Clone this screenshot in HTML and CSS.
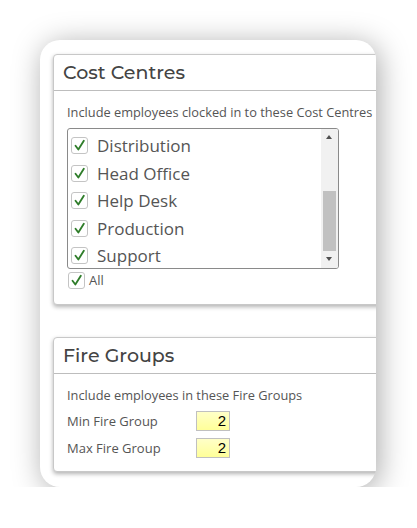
FILE: index.html
```html
<!DOCTYPE html>
<html>
<head>
<meta charset="utf-8">
<link rel="stylesheet" href="styles.css">
</head>
<body>
<div class="card">
  <section class="panel cost">
    <h2 class="panel-title">Cost Centres</h2>
    <div class="panel-body">
      <p class="intro">Include employees clocked in to these Cost Centres</p>
      <div class="listbox">
        <ul class="items">
          <li class="item"><span class="cb"><svg viewBox="0 0 17 17"><path d="M4 8.8 L7.2 13 L13.4 3.2" /></svg></span>Distribution</li>
          <li class="item"><span class="cb"><svg viewBox="0 0 17 17"><path d="M4 8.8 L7.2 13 L13.4 3.2" /></svg></span>Head Office</li>
          <li class="item"><span class="cb"><svg viewBox="0 0 17 17"><path d="M4 8.8 L7.2 13 L13.4 3.2" /></svg></span>Help Desk</li>
          <li class="item"><span class="cb"><svg viewBox="0 0 17 17"><path d="M4 8.8 L7.2 13 L13.4 3.2" /></svg></span>Production</li>
          <li class="item"><span class="cb"><svg viewBox="0 0 17 17"><path d="M4 8.8 L7.2 13 L13.4 3.2" /></svg></span>Support</li>
        </ul>
        <div class="scrollbar">
          <span class="arrow up"></span>
          <div class="track"><div class="thumb"></div></div>
          <span class="arrow down"></span>
        </div>
      </div>
      <label class="all"><span class="cb"><svg viewBox="0 0 17 17"><path d="M4 8.8 L7.2 13 L13.4 3.2" /></svg></span>All</label>
    </div>
  </section>

  <section class="panel fire">
    <h2 class="panel-title">Fire Groups</h2>
    <div class="panel-body">
      <p class="intro">Include employees in these Fire Groups</p>
      <div class="field"><span class="field-label">Min Fire Group</span><span class="num">2</span></div>
      <div class="field"><span class="field-label">Max Fire Group</span><span class="num">2</span></div>
    </div>
  </section>
</div>
</body>
</html>
```

FILE: styles.css
```css
html, body {
  margin: 0;
  padding: 0;
  background: #ffffff;
}
body {
  padding: 40px 0 0 40px;
  font-family: "Open Sans", "Noto Sans", sans-serif;
  color: #555;
}
.card {
  width: 336px;
  height: 447px;
  box-sizing: border-box;
  background: #fff;
  border-radius: 20px;
  box-shadow: 3px 4px 30px rgba(0, 0, 0, 0.34);
  overflow: hidden;
  padding: 14px 0 0 13px;
}
.panel {
  width: 360px;
  box-sizing: border-box;
  border: 1px solid #c8c8c8;
  border-radius: 4px;
  background: #fff;
  box-shadow: 0 2px 4px rgba(0, 0, 0, 0.3);
}
.panel-title {
  margin: 0;
  height: 36px;
  box-sizing: border-box;
  border-bottom: 1px solid #bdbdbd;
  padding: 6px 0 0 9px;
  font-family: "Montserrat", "Noto Sans", sans-serif;
  font-weight: 500;
  font-size: 19px;
  color: #444;
  line-height: 24px;
}
.panel-body {
  padding: 12px 0 0 13px;
}
.intro {
  margin: 0;
  font-size: 12.8px;
  line-height: 18px;
  color: #555;
}
.cost .panel-body { height: 213px; box-sizing: border-box; }
.listbox {
  margin-top: 7px;
  width: 272px;
  height: 141px;
  box-sizing: border-box;
  border: 1px solid #8a8a8a;
  border-radius: 3px;
  display: flex;
  overflow: hidden;
}
.items {
  list-style: none;
  margin: 0;
  padding: 3px 0 0 0;
  flex: 1;
}
.item {
  height: 27.5px;
  display: flex;
  align-items: center;
  padding-left: 3px;
  font-size: 17px;
  color: #555;
}
.cb {
  width: 17px;
  height: 17px;
  box-sizing: border-box;
  border: 1px solid #c4c4c4;
  border-radius: 3px;
  background: #fff;
  display: inline-flex;
  flex: none;
}
.cb svg {
  width: 100%;
  height: 100%;
  fill: none;
  stroke: #2f7d2a;
  stroke-width: 2.1;
  stroke-linecap: round;
  stroke-linejoin: round;
}
.item .cb { margin-right: 9px; }
.scrollbar {
  width: 17px;
  background: #f1f1f1;
  display: flex;
  flex-direction: column;
  align-items: center;
}
.arrow {
  height: 17px;
  width: 17px;
  position: relative;
  flex: none;
}
.arrow::after {
  content: "";
  position: absolute;
  left: 5px;
  width: 0;
  height: 0;
  border-left: 3.5px solid transparent;
  border-right: 3.5px solid transparent;
}
.arrow.up::after {
  top: 6px;
  border-bottom: 4px solid #505050;
}
.arrow.down::after {
  top: 6px;
  border-top: 4px solid #505050;
}
.track {
  flex: 1;
  width: 13px;
  display: flex;
  flex-direction: column;
  justify-content: flex-end;
}
.thumb {
  height: 60px;
  background: #c1c1c1;
}
.all {
  display: flex;
  align-items: center;
  margin-top: 2px;
  margin-left: 1px;
  font-size: 13px;
  color: #555;
}
.all .cb { margin-right: 4px; }

.fire {
  margin-top: 32px;
}
.fire .panel-body {
  height: 97px;
  box-sizing: border-box;
  padding-top: 12px;
}
.field {
  display: flex;
  align-items: center;
  height: 20px;
  margin-top: 7px;
  font-size: 13px;
}
.fire .intro { margin-bottom: 0; }
.field-label {
  width: 129px;
}
.num {
  width: 34px;
  height: 20px;
  box-sizing: border-box;
  border: 1px solid #c0c0c0;
  background: linear-gradient(#ffffc8, #ffff99);
  font-family: "Liberation Sans", Arial, sans-serif;
  font-size: 15px;
  color: #000;
  text-align: right;
  padding-right: 3px;
  line-height: 18px;
}
```
